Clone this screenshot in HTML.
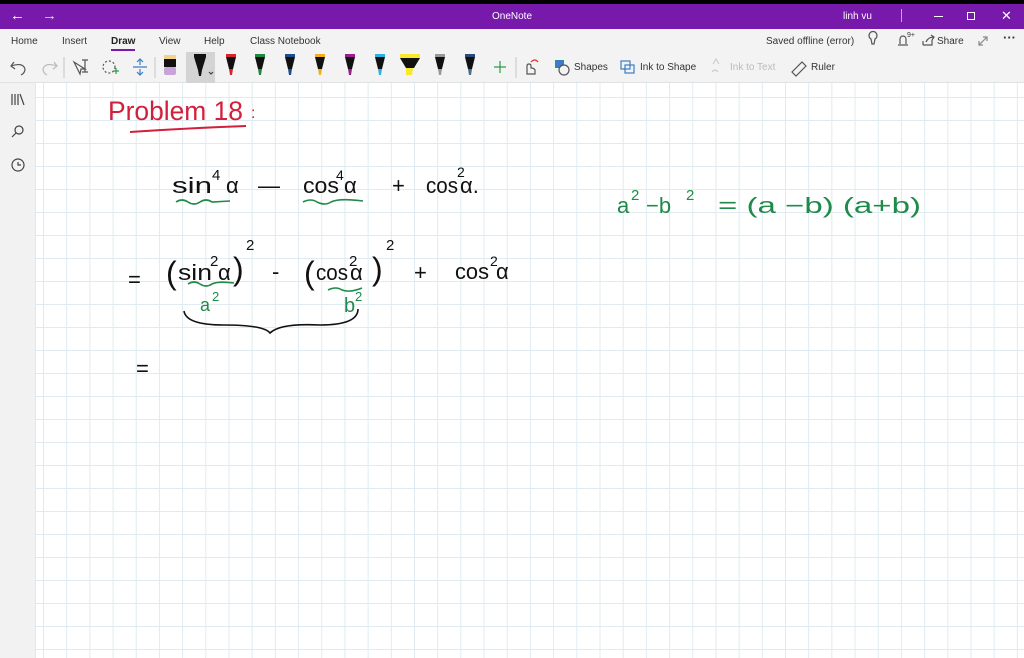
<!DOCTYPE html>
<html><head><meta charset="utf-8"><style>
*{margin:0;padding:0;box-sizing:border-box}
body{width:1024px;height:658px;overflow:hidden;font-family:"Liberation Sans",sans-serif;background:#fff;position:relative}
#top{position:absolute;left:0;top:0;width:1024px;height:4px;background:#000}
#title{position:absolute;left:0;top:4px;width:1024px;height:25px;background:#7719aa;color:#fff;font-size:10px}
#title span{position:absolute;top:7px}
#ribbon{position:absolute;left:0;top:29px;width:1024px;height:54px;background:#f3f3f3;border-bottom:1px solid #e2e2e2}
.tab{position:absolute;top:7px;font-size:10px;color:#333}
.t2{position:absolute;font-size:10px;color:#333}
#side{position:absolute;left:0;top:83px;width:36px;height:575px;background:#f2f2f2;border-right:1px solid #e6e6e6}
#canvas{position:absolute;left:36px;top:83px;width:988px;height:575px;
background-color:#fff;
background-image:linear-gradient(to right,#dfebf1 1px,transparent 1px),linear-gradient(to bottom,#dfebf1 1px,transparent 1px);
background-size:23.2px 23px;background-position:7px 14px}
svg{position:absolute;left:0;top:0}
.ink{font-family:"Liberation Sans",sans-serif}
</style></head><body>
<div id="top"></div>
<div id="title">
<span style="left:10px;top:3px;font-size:15px">←</span>
<span style="left:42px;top:3px;font-size:15px;opacity:.8">→</span>
<span style="left:492px">OneNote</span>
<span style="left:843px">linh vu</span>
<span style="left:901px;top:5px;width:1px;height:13px;background:#c9a3dd"></span>
<span style="left:934px;top:12px;width:9px;height:1px;background:#fff"></span>
<span style="left:967px;top:8px;width:8px;height:8px;border:1px solid #fff"></span>
<span style="left:1001px;top:4px;font-size:13px">✕</span>
</div>
<div id="ribbon">
<span class="tab" style="left:11px">Home</span>
<span class="tab" style="left:62px">Insert</span>
<span class="tab" style="left:111px;color:#222;font-weight:bold">Draw</span>
<span style="position:absolute;left:111px;top:20px;width:24px;height:2px;background:#7719aa"></span>
<span class="tab" style="left:159px">View</span>
<span class="tab" style="left:204px">Help</span>
<span class="tab" style="left:250px">Class Notebook</span>
<span class="t2" style="left:766px;top:7px">Saved offline (error)</span>
<span class="t2" style="left:937px;top:7px">Share</span>
<span class="t2" style="left:1003px;top:1px;font-size:13px;font-weight:bold">···</span>
<span class="t2" style="left:574px;top:33px">Shapes</span>
<span class="t2" style="left:640px;top:33px">Ink to Shape</span>
<span class="t2" style="left:730px;top:33px;color:#bbb">Ink to Text</span>
<span class="t2" style="left:811px;top:33px">Ruler</span>
<span style="position:absolute;left:186px;top:23px;width:29px;height:31px;background:#d4d4d4"></span>
</div>
<div id="side"></div>
<div id="canvas"></div>
<svg width="1024" height="658" viewBox="0 0 1024 658">
<g fill="none" stroke="#555" stroke-width="1.2">
<path d="M14 62 l-3 4 l4 3 M11 66 q12 -4 14 3 q0 4 -4 6"/>
<path d="M54 62 l3 4 l-4 3 M57 66 q-12 -4 -14 3 q0 4 4 6" stroke="#bbb"/>
<line x1="64" y1="57" x2="64" y2="78" stroke="#ccc"/>
<path d="M74 62 l6 12 l1 -5 l4 0 z"/><path d="M82 60 h6 M85 60 v12 M82 72 h6"/>
<circle cx="109" cy="67" r="6" stroke-dasharray="2 2"/>
<path d="M113 71 h6 M116 68 v6" stroke="#2e9b4a"/>
<path d="M133 67 h14 M140 59 v6 M137 62 l3 -3 l3 3 M140 69 v6 M137 72 l3 3 l3 -3" stroke="#3a7dc4"/>
<line x1="155" y1="57" x2="155" y2="78" stroke="#ccc"/>
<line x1="516" y1="57" x2="516" y2="78" stroke="#ccc"/>
<path d="M494 67 h12 M500 61 v12" stroke="#2e9b4a"/>
<path d="M527 74 v-8 q0-2 2-2 q2 0 2 2 v2 q3 0 4 2 v4 z"/><path d="M531 62 q4 -4 7 0" stroke="#d33"/>
<rect x="555" y="60" width="9" height="8" fill="#3a7dc4" stroke="none"/><circle cx="564" cy="70" r="5" fill="#f3f3f3"/>
<rect x="621" y="61" width="9" height="8" stroke="#3a7dc4"/><rect x="625" y="65" width="9" height="8" stroke="#3a7dc4"/>
<path d="M713 64 l3 -5 l3 5 M712 72 q3 -4 6 0" stroke="#ccc"/>
<path d="M792 72 l10 -10 l4 4 l-10 10 z"/>
<path d="M871 39 a4 4 0 1 1 4 0 l-1 5 h-2 z"/>
<path d="M898 45 h10 M900 44 v-5 a3 3 0 0 1 6 0 v5"/>
<path d="M923 45 h9 v-5 M923 45 v-4 M926 42 q2 -5 8 -5 M931 35 l3 2 l-2 3"/>
<path d="M979 45 l8 -8 M979 41 v4 h4 M987 41 v-4 h-4" stroke="#888"/>
</g>
<text x="907" y="37" font-size="7" fill="#333">9+</text>
<rect x="164" y="55" width="12" height="4" fill="#f3d38a"/><rect x="164" y="59" width="12" height="8" fill="#111"/><rect x="164" y="67" width="12" height="8" rx="2" fill="#c8a3d9"/>
<rect x="194" y="54" width="12" height="3" fill="#111"/><path d="M194 57 h12 l-4 13 h-4 z" fill="#111"/><path d="M198 70 h4 l-1 6 h-2z" fill="#111"/>
<path d="M209 72 l2 2 l2 -2" stroke="#333" fill="none"/>
<g>
<rect x="226" y="54" width="10" height="3" fill="#d9242c"/><path d="M226 57 h10 l-3 12 h-4 z" fill="#111"/><path d="M229 69 h4 l-1 6 h-2z" fill="#d9242c"/>
<rect x="255" y="54" width="10" height="3" fill="#1f8a3f"/><path d="M255 57 h10 l-3 12 h-4 z" fill="#111"/><path d="M258 69 h4 l-1 6 h-2z" fill="#1f8a3f"/>
<rect x="285" y="54" width="10" height="3" fill="#1d4f8f"/><path d="M285 57 h10 l-3 12 h-4 z" fill="#111"/><path d="M288 69 h4 l-1 6 h-2z" fill="#1d4f8f"/>
<rect x="315" y="54" width="10" height="3" fill="#f0b020"/><path d="M315 57 h10 l-3 12 h-4 z" fill="#111"/><path d="M318 69 h4 l-1 6 h-2z" fill="#f0b020"/>
<rect x="345" y="54" width="10" height="3" fill="#9b1d8f"/><path d="M345 57 h10 l-3 12 h-4 z" fill="#111"/><path d="M348 69 h4 l-1 6 h-2z" fill="#9b1d8f"/>
<rect x="375" y="54" width="10" height="3" fill="#2bb3e6"/><path d="M375 57 h10 l-3 12 h-4 z" fill="#111"/><path d="M378 69 h4 l-1 6 h-2z" fill="#2bb3e6"/>
<rect x="400" y="54" width="20" height="4" fill="#f7e82a"/><path d="M400 58 h20 l-6 10 h-8 z" fill="#111"/><path d="M406 68 h7 l-1 7 h-6z" fill="#f7e82a"/>
<rect x="435" y="54" width="10" height="3" fill="#999"/><path d="M435 57 h10 l-3 12 h-4 z" fill="#111"/><path d="M438 69 h4 l-1 6 h-2z" fill="#999"/>
<rect x="465" y="54" width="10" height="3" fill="#2c4a7a"/><path d="M465 57 h10 l-3 12 h-4 z" fill="#111"/><path d="M468 69 h4 l-1 6 h-2z" fill="#4a6f8a"/>
</g>
<g fill="none" stroke="#444" stroke-width="1.2">
<path d="M12 94 v11 M15 94 v11 M18 94 v11 M20 94 l4 11"/>
<circle cx="19" cy="130" r="4"/><path d="M16 133 l-4 4"/>
<circle cx="18" cy="165" r="6"/><path d="M18 162 v3 h3"/>
</g>
<g class="ink" fill="#d21f3c">
<text x="108" y="120" font-size="27" textLength="135" lengthAdjust="spacingAndGlyphs">Problem 18</text>
<text x="251" y="118" font-size="16">:</text>
</g>
<path d="M130 132 Q190 128 246 126" stroke="#d21f3c" stroke-width="2" fill="none"/>
<g class="ink" fill="#111" font-size="22">
<text x="172" y="193" textLength="40" lengthAdjust="spacingAndGlyphs">sin</text>
<text x="212" y="180" font-size="15">4</text>
<text x="226" y="193">α</text>
<text x="258" y="193">—</text>
<text x="303" y="193" textLength="36" lengthAdjust="spacingAndGlyphs">cos</text>
<text x="336" y="180" font-size="14">4</text>
<text x="344" y="193">α</text>
<text x="392" y="193">+</text>
<text x="426" y="193" textLength="32" lengthAdjust="spacingAndGlyphs">cos</text>
<text x="457" y="177" font-size="14">2</text>
<text x="460" y="193">α.</text>
<text x="128" y="287">=</text>
<text x="166" y="284" font-size="32">(</text>
<text x="178" y="280" textLength="34" lengthAdjust="spacingAndGlyphs">sin</text>
<text x="210" y="266" font-size="15">2</text>
<text x="218" y="280">α</text>
<text x="233" y="280" font-size="32">)</text>
<text x="246" y="250" font-size="15">2</text>
<text x="272" y="279">-</text>
<text x="304" y="284" font-size="32">(</text>
<text x="316" y="280" textLength="32" lengthAdjust="spacingAndGlyphs">cos</text>
<text x="349" y="266" font-size="15">2</text>
<text x="350" y="280">α</text>
<text x="372" y="280" font-size="32">)</text>
<text x="386" y="250" font-size="15">2</text>
<text x="414" y="280">+</text>
<text x="455" y="279" textLength="34" lengthAdjust="spacingAndGlyphs">cos</text>
<text x="490" y="266" font-size="14">2</text>
<text x="496" y="279">α</text>
<text x="136" y="376">=</text>
</g>
<path d="M184 311 q2 14 40 14 q40 0 46 8 q10 -10 50 -8 q38 0 38 -16" stroke="#111" stroke-width="1.6" fill="none"/>
<g fill="none" stroke="#1f8a4a" stroke-width="1.6">
<path d="M176 202 q6 -4 12 0 q6 4 12 0 q6 -4 12 0 l18 -1"/>
<path d="M303 202 q8 -4 14 0 q8 4 14 0 q8 -4 32 -1"/>
<path d="M188 284 q6 -4 12 0 q6 4 12 0 q6 -3 22 -1"/>
<path d="M328 290 q8 -4 14 0 q8 3 20 -2"/>
</g>
<g class="ink" fill="#1f8a4a" font-size="22">
<text x="200" y="311" font-size="18">a</text>
<text x="212" y="301" font-size="13">2</text>
<text x="344" y="312" font-size="20">b</text>
<text x="355" y="301" font-size="13">2</text>
<text x="617" y="213">a</text>
<text x="631" y="200" font-size="15">2</text>
<text x="646" y="213">−b</text>
<text x="686" y="200" font-size="15">2</text>
<text x="718" y="213" textLength="203" lengthAdjust="spacingAndGlyphs">= (a −b) (a+b)</text>
</g>
</svg>
</body></html>
